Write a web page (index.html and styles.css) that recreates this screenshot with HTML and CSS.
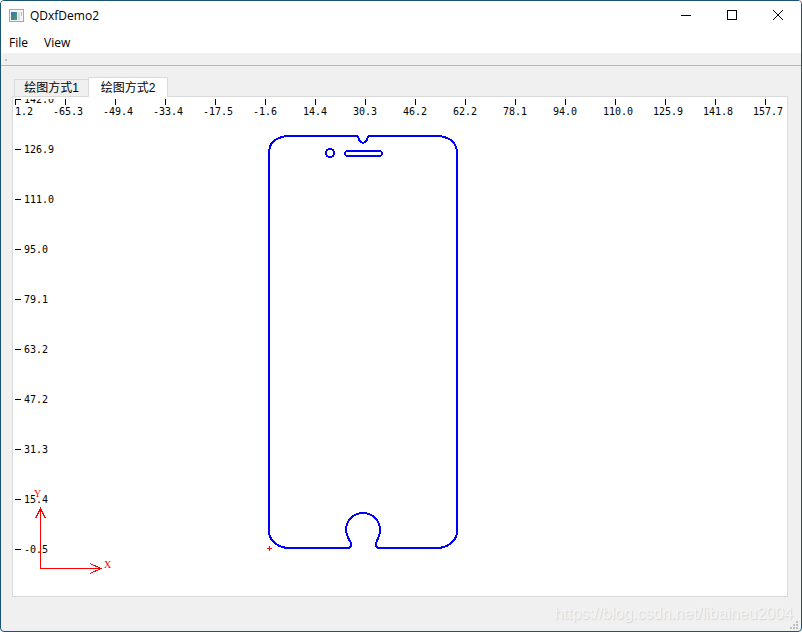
FILE: index.html
```
<!DOCTYPE html>
<html lang="en">
<head>
  <meta charset="UTF-8">
  <meta name="viewport" content="width=device-width, initial-scale=1.0">
  <title>QDxfDemo2</title>
  <link rel="stylesheet" href="styles.css">
</head>
<body>
  <div class="window">
    <header class="title-bar">
      <svg class="app-icon" width="15" height="13" viewBox="0 0 15 13">
        <defs>
          <linearGradient id="app-fill" x1="0" y1="0" x2="1" y2="1">
            <stop offset="0" stop-color="#3d74a8"/>
            <stop offset="1" stop-color="#4e9a6a"/>
          </linearGradient>
        </defs>
        <rect x="0.5" y="0.5" width="14" height="12" fill="#f4f4f4" stroke="#a4a9ae"/>
        <rect x="2" y="3" width="6" height="8" fill="url(#app-fill)"/>
        <rect x="9" y="3" width="2" height="8" fill="#d4dee2"/>
        <rect x="12" y="3" width="1" height="4" fill="#9fd0b4"/>
      </svg>
      <h1>QDxfDemo2</h1>
      <div class="window-buttons">
        <button aria-label="Minimize">
          <svg width="10" height="10" viewBox="0 0 10 10"><path d="M0 5.5h10"/></svg>
        </button>
        <button aria-label="Maximize">
          <svg width="10" height="10" viewBox="0 0 10 10"><path d="M0.5 0.5h9v9h-9z"/></svg>
        </button>
        <button aria-label="Close">
          <svg class="close-icon" width="10" height="10" viewBox="0 0 10 10"><path d="M0 0l10 10M10 0L0 10"/></svg>
        </button>
      </div>
    </header>

    <nav class="menu-bar">
      <button>File</button>
      <button>View</button>
    </nav>

    <div class="tool-bar"><span class="tool-handle"></span></div>

    <main class="content">
      <div class="tabs" role="tablist">
        <button class="tab" role="tab" aria-selected="false">绘图方式1</button>
        <button class="tab active" role="tab" aria-selected="true">绘图方式2</button>
      </div>

      <div class="pane" role="tabpanel">
        <svg class="drawing">
          <!-- horizontal ruler -->
          <path class="tick" d="M0.5 0v6M50.5 0v6M100.5 0v6M150.5 0v6M200.5 0v6M250.5 0v6M300.5 0v6M350.5 0v6M400.5 0v6M450.5 0v6M500.5 0v6M550.5 0v6M600.5 0v6M650.5 0v6M700.5 0v6M750.5 0v6"/>
          <g class="ruler">
            <text x="-12" y="16">-81.2</text>
            <text x="38" y="16">-65.3</text>
            <text x="88" y="16">-49.4</text>
            <text x="138" y="16">-33.4</text>
            <text x="188" y="16">-17.5</text>
            <text x="238" y="16">-1.6</text>
            <text x="288" y="16">14.4</text>
            <text x="338" y="16">30.3</text>
            <text x="388" y="16">46.2</text>
            <text x="438" y="16">62.2</text>
            <text x="488" y="16">78.1</text>
            <text x="538" y="16">94.0</text>
            <text x="588" y="16">110.0</text>
            <text x="638" y="16">125.9</text>
            <text x="688" y="16">141.8</text>
            <text x="738" y="16">157.7</text>
          </g>

          <!-- vertical ruler -->
          <path class="tick" d="M0 0.5h6M0 50.5h6M0 100.5h6M0 150.5h6M0 200.5h6M0 250.5h6M0 300.5h6M0 350.5h6M0 400.5h6M0 450.5h6"/>
          <g class="ruler">
            <text x="9" y="4">142.0</text>
            <text x="9" y="54">126.9</text>
            <text x="9" y="104">111.0</text>
            <text x="9" y="154">95.0</text>
            <text x="9" y="204">79.1</text>
            <text x="9" y="254">63.2</text>
            <text x="9" y="304">47.2</text>
            <text x="9" y="354">31.3</text>
            <text x="9" y="404">15.4</text>
            <text x="9" y="454">-0.5</text>
          </g>

          <!-- dxf outline -->
          <g class="outline">
            <path d="M272 37H341C344 37 343 39 344 41Q348 47 352 41C353 39 352 37 355 37H424Q433 38 438 43Q442 47 442 54V433Q442 438 438 442Q433 448 424 449H363Q360 448 361 444Q365 436 365 431A17 17 0 1 0 331 431Q331 436 336 444Q337 448 334 449H272Q263 448 258 442Q254 438 254 433V54Q254 47 258 43Q263 38 272 37Z"/>
            <circle cx="315" cy="54" r="4"/>
            <rect x="330" y="52" width="37" height="5" rx="3"/>
          </g>

          <!-- origin and axes -->
          <path class="axis" d="M252 449.5h5M254.5 447v5"/>
          <path class="axis" d="M25.5 409V469.5H86M20.5 419.5L25.5 409.5L30.5 419.5M75 464.5L86 469.5L75 474.5"/>
          <g class="axis-label">
            <text x="19" y="398">Y</text>
            <text x="89" y="469">X</text>
          </g>
        </svg>
      </div>
    </main>

    <footer class="status-bar">
      <span class="watermark">https://blog.csdn.net/libaineu2004</span>
      <svg class="size-grip" width="8" height="8" viewBox="0 0 8 8">
        <path d="M6 0h2v2h-2zM3 3h2v2h-2zM6 3h2v2h-2zM0 6h2v2h-2zM3 6h2v2h-2zM6 6h2v2h-2z"/>
      </svg>
    </footer>
  </div>
</body>
</html>
```

FILE: styles.css
```
* {
  box-sizing: border-box;
}

body {
  margin: 0;
  font-family: "Open Sans", "Noto Sans CJK SC", sans-serif;
  font-size: 12px;
  color: #000;
}

button {
  padding: 0;
  border: none;
  background: none;
  font: inherit;
  color: inherit;
}

.window {
  display: flex;
  flex-direction: column;
  height: 100vh;
  border: 1px solid #1b5472;
  border-radius: 4px;
  overflow: hidden;
  background: #f0f0f0;
}

.title-bar {
  display: flex;
  align-items: center;
  height: 28px;
  padding-left: 8px;
  background: #fff;
}

.title-bar h1 {
  flex: 1;
  margin: 0 0 0 6px;
  font-size: 12px;
  font-weight: normal;
}

.window-buttons {
  display: flex;
}

.window-buttons button {
  display: flex;
  align-items: center;
  justify-content: center;
  width: 46px;
  height: 28px;
}

.window-buttons svg {
  fill: none;
  stroke: #000;
  shape-rendering: crispEdges;
}

.window-buttons .close-icon {
  shape-rendering: auto;
}

.menu-bar {
  display: flex;
  gap: 16px;
  height: 24px;
  padding: 4px 8px 0;
  background: #fff;
}

.menu-bar button {
  line-height: 20px;
}

.tool-bar {
  height: 13px;
  padding: 5px 4px;
  border-top: 1px solid #f0f0f0;
  border-bottom: 1px solid #b8b8b8;
}

.tool-handle {
  display: block;
  width: 2px;
  height: 2px;
  background: #c0c0c0;
}

.content {
  display: flex;
  flex: 1;
  flex-direction: column;
  min-height: 0;
  padding: 11px 13px 0 11px;
}

.tabs {
  display: flex;
  align-items: flex-end;
  height: 19px;
  padding-left: 2px;
}

.tab {
  width: 74px;
  height: 17px;
  border: 1px solid #d9d9d9;
  border-width: 1px 0 0 1px;
  font-family: "Liberation Sans", "Noto Sans CJK SC", sans-serif;
  line-height: 16px;
}

.tab.active {
  z-index: 1;
  width: 80px;
  height: 20px;
  margin-bottom: -1px;
  border-right-width: 1px;
  background: #fff;
}

.pane {
  display: flex;
  flex: 1;
  min-height: 0;
  padding: 2px;
  border: 1px solid #d9d9d9;
  background: #fff;
}

.drawing {
  flex: 1;
  width: 100%;
  height: 100%;
  overflow: hidden;
  shape-rendering: crispEdges;
}

.tick {
  stroke: #000;
}

.ruler {
  font-family: "DejaVu Sans Mono", monospace;
  font-size: 10px;
}

.outline {
  fill: none;
  stroke: #0000ff;
  stroke-width: 2;
}

.axis {
  fill: none;
  stroke: #ff0000;
}

.axis-label {
  fill: #ff0000;
  font-family: "Liberation Serif", serif;
  font-size: 10px;
}

.status-bar {
  display: flex;
  align-items: flex-end;
  justify-content: flex-end;
  height: 34px;
  padding: 0 3px 2px 0;
}

.watermark {
  margin: 0 -3px 6px 0;
  font-family: "Liberation Sans", sans-serif;
  font-size: 16px;
  line-height: 18px;
  color: #f4f4f4;
  text-shadow: 1px 1px 1px #d4d4d4;
}

.size-grip {
  fill: #bfbfbf;
}
```
